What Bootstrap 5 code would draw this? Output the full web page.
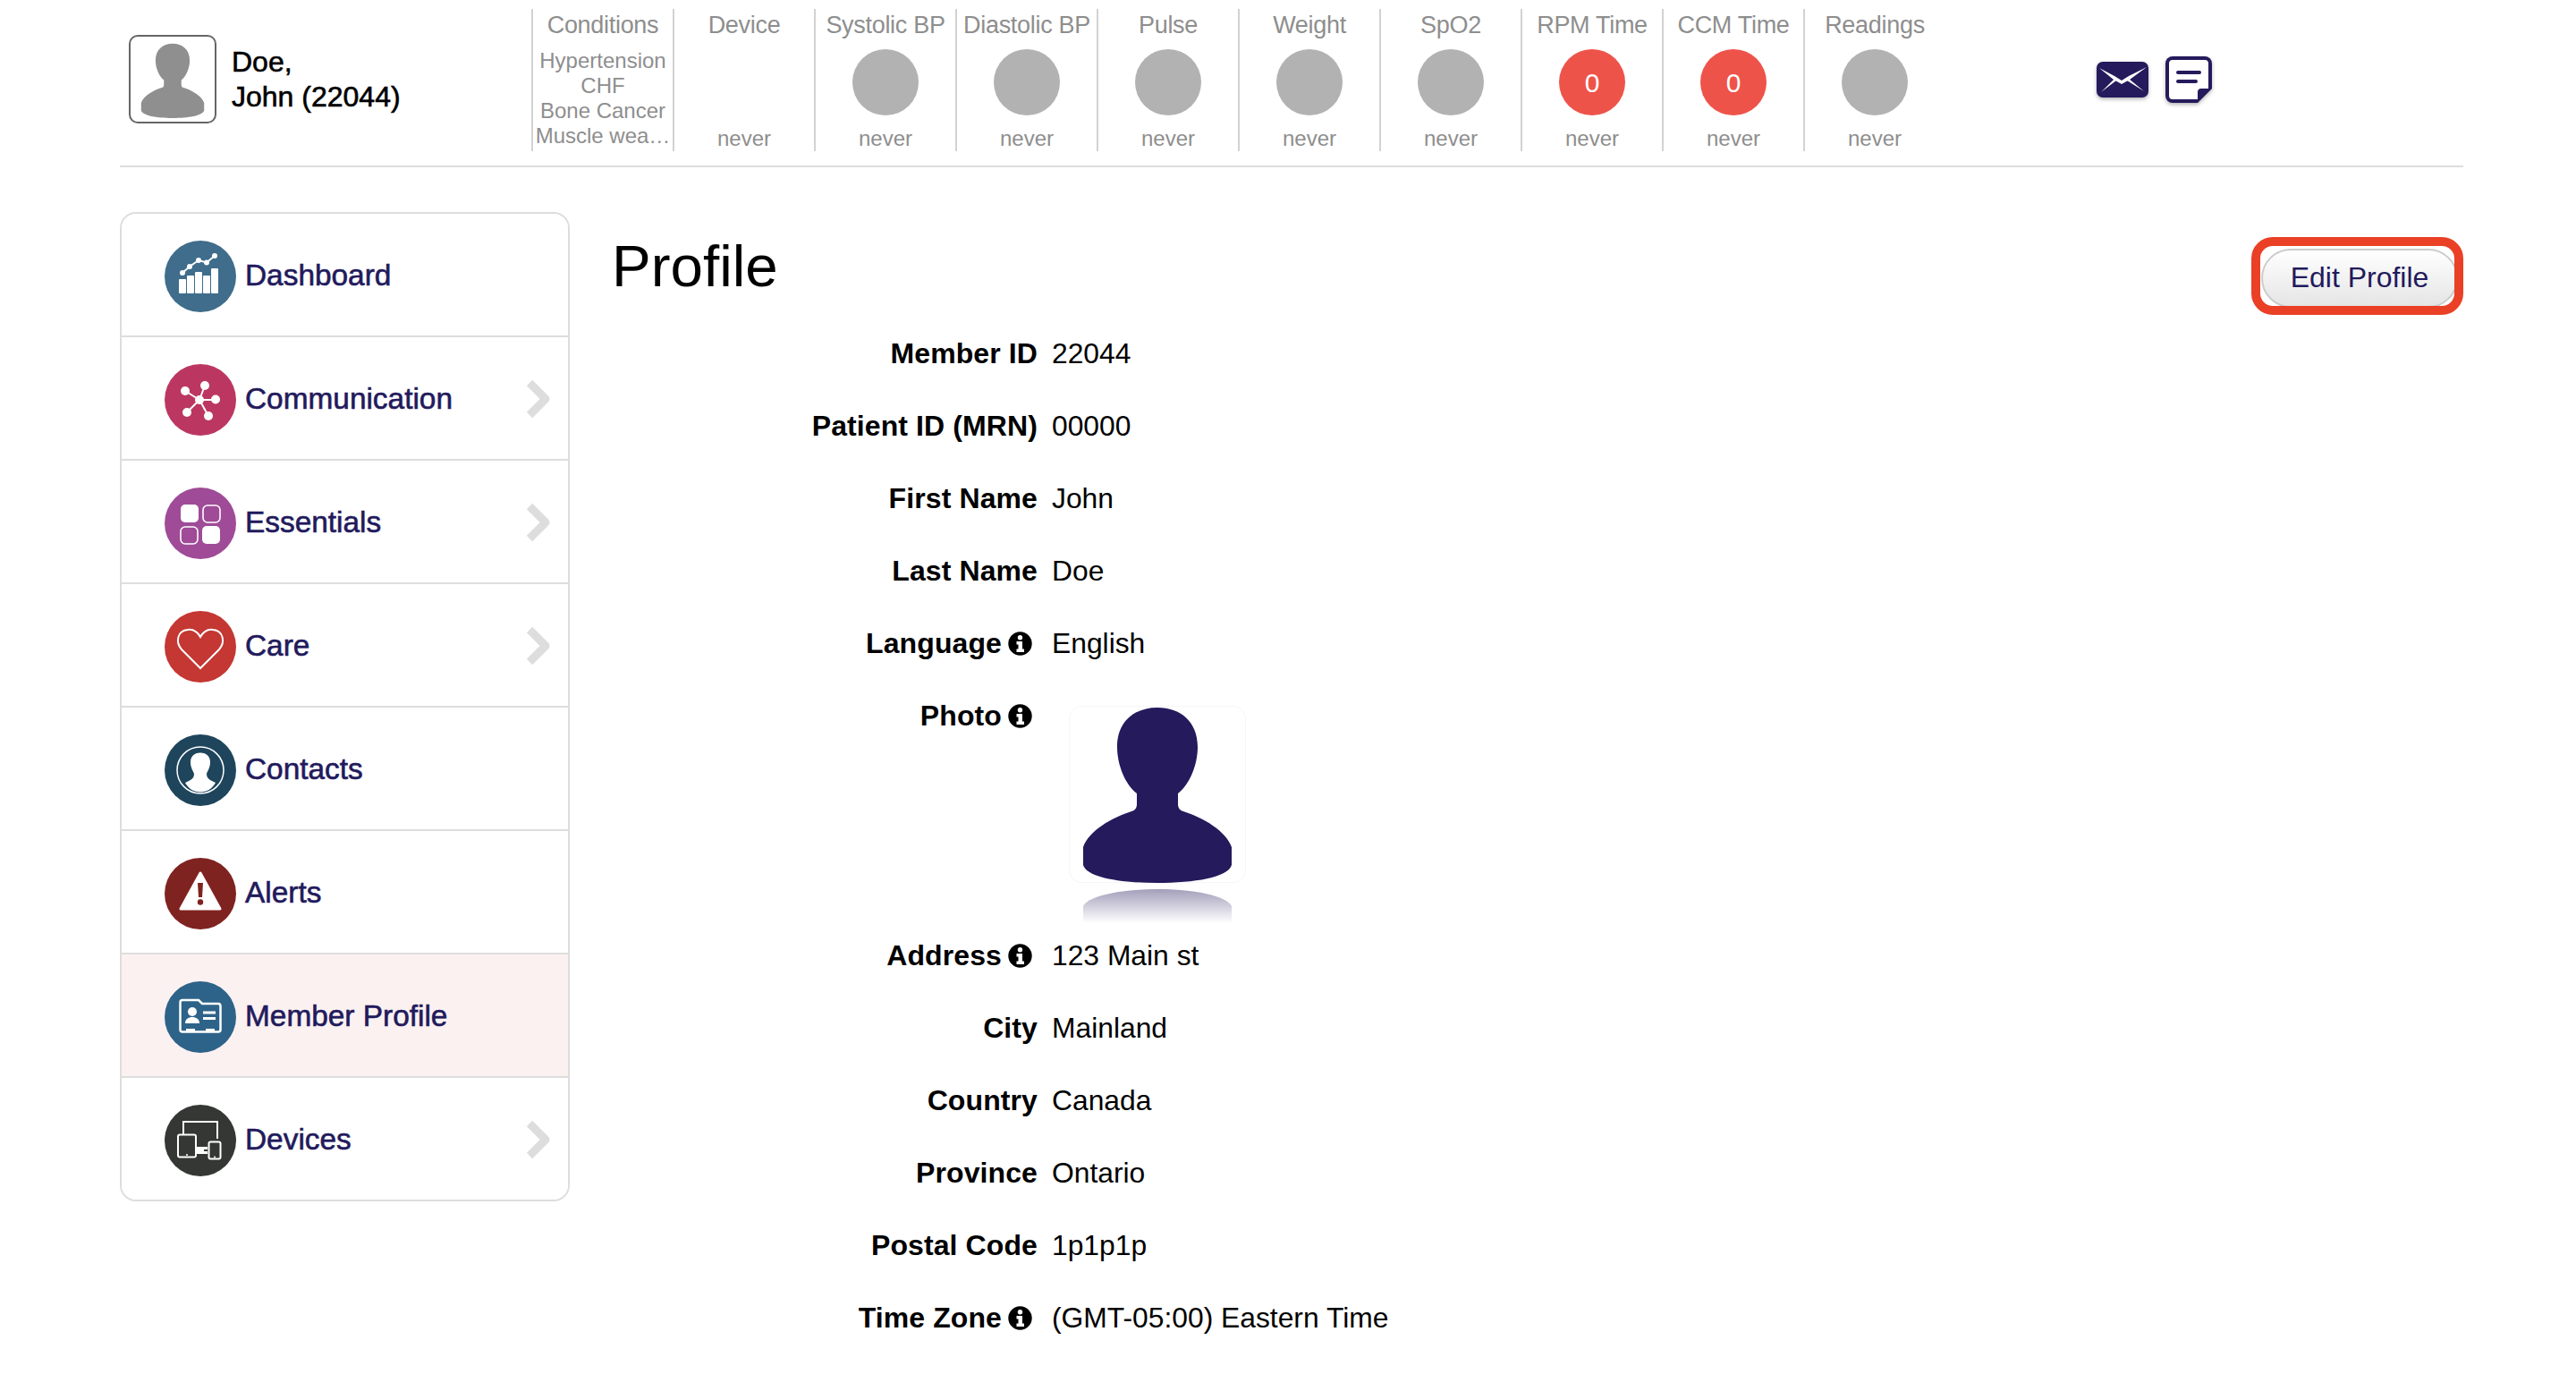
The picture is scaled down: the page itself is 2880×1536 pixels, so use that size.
<!DOCTYPE html>
<html lang="en">
<head>
    <meta charset="UTF-8">
    <meta name="viewport" content="width=device-width, initial-scale=1.0">
    <title>Profile</title>
    <link href="https://cdn.jsdelivr.net/npm/bootstrap@5.3.0/dist/css/bootstrap.min.css" rel="stylesheet">
    <style>
        body { font-family: "Liberation Sans", Arial, sans-serif; color: #000; background: #fff; }
        .page-wrap { padding: 0 126px 0 134px; }

        /* top bar */
        .top-bar { height: 187px; border-bottom: 2px solid #ddd; }
        .patient-box { width: 460px; margin-top: 39px; padding-left: 10px; }
        .avatar-box { width: 98px; height: 99px; border: 2px solid #666; border-radius: 10px; }
        .avatar-box svg { fill: #8f8f8f; margin-top: 3px; }
        .patient-name { font-size: 32px; line-height: 39px; margin-left: 17px; -webkit-text-stroke: .6px #000; }
        .stat-col { width: 158px; height: 159px; margin-top: 10px; border-left: 2px solid #d2d2d2; color: #8e8e8e; text-align: center; }
        .stat-col:last-of-type { border-right: 2px solid #d2d2d2; width: 160px; }
        .stat-title { font-size: 27px; line-height: 36px; white-space: nowrap; letter-spacing: -.3px; }
        .stat-list { font-size: 24px; line-height: 28px; margin-top: 8px; white-space: nowrap; }
        .stat-dot { width: 74px; height: 74px; margin: 9px auto 0; border-radius: 50%; background: #b2b2b2; color: #fff; font-size: 30px; }
        .stat-dot.is-late { background: #ee534a; }
        .stat-never { font-size: 24px; line-height: 30px; margin-top: auto; margin-bottom: -1px; }
        .top-icons { margin: 63px 0 0 170px; gap: 19px; }
        .top-icons svg { filter: drop-shadow(0 2px 2px rgba(0,0,0,.3)); }

        /* side menu */
        .side-menu { width: 503px; margin-top: 50px; flex: none; border: 2px solid #ddd; border-radius: 18px; overflow: hidden; }
        .side-menu .list-group-item { height: 138px; padding: 2px 20px 0 48px; border: 0; border-bottom: 2px solid #ddd; border-radius: 0; font-size: 33.4px; color: #221a5c; -webkit-text-stroke: .6px #221a5c; gap: 10px; }
        .side-menu .list-group-item:last-child { border-bottom: 0; height: 136px; }
        .side-menu .list-group-item.is-current { background: #fcf1f1; }
        .menu-icon { width: 80px; height: 80px; margin-top: 2px; flex: none; }
        .menu-arrow { margin-left: auto; }

        /* profile */
        .profile-main { margin: 50px 0 0 51px; }
        .profile-title { font-size: 65.5px; font-weight: 400; line-height: 77px; margin: 22px 0 0 -4px; }
        .title-row { height: 139px; }
        .edit-ring { width: 237px; height: 87px; margin-top: 28px; border: 10px solid #ea4026; border-radius: 24px; overflow: hidden; background: #fff; }
        .edit-btn { display: block; width: 220px; height: 66px; margin: 3px 0 0 1px; border: 2px solid #ccc; border-radius: 33px; background: linear-gradient(#fff, #e5e5e5); color: #221a5c; font-size: 32px; line-height: 60px; text-align: center; }
        .info-row { height: 81px; font-size: 31.8px; line-height: 38px; }
        .info-row.photo-row { height: 268px; }
        .info-label { width: 472px; flex: none; text-align: right; font-weight: 700; font-size: 32px; letter-spacing: .1px; }
        .info-value { margin-left: 16px; }
        .info-glyph { width: 27px; height: 27px; margin: -5px 6px 0 7px; vertical-align: middle; }
        .photo-frame { width: 198px; height: 198px; margin: 8px 0 0 35px; border: 1px solid #f6f6f6; border-radius: 14px; }
        .photo-frame svg { display: block; margin: -1px; fill: #251a5c; }
        .photo-shine { display: block; margin: 5px 0 0 35px; }
    </style>
</head>
<body>

<svg width="0" height="0" class="position-absolute">
    <defs>
        <symbol id="bust" viewBox="0 0 198 198">
            <path d="M99 2C125 2 144 18 144 46C144 66 135 88 122 98V110C122 114 124 117 128 118C150 125 176 140 182 158V178C178 192 140 198 99 198C58 198 20 192 16 178V158C22 140 48 125 70 118C74 117 76 114 76 110V98C63 88 54 66 54 46C54 18 73 2 99 2Z"/>
        </symbol>
        <symbol id="info" viewBox="0 0 27 27">
            <circle cx="13.5" cy="13.5" r="13.2" fill="#000"/>
            <circle cx="13.5" cy="6.8" r="2.7" fill="#fff"/>
            <path d="M9.5 11h6.5v8.5h2v3.5h-8.5v-3.5h2v-5h-2z" fill="#fff"/>
        </symbol>
        <symbol id="arrow" viewBox="0 0 28 46">
            <path d="M5 5L23 23L5 41" fill="none" stroke="#ddd" stroke-width="9" stroke-linejoin="round"/>
        </symbol>
        <linearGradient id="shine" x1="0" y1="0" x2="0" y2="1">
            <stop offset="0" stop-color="#251a5c" stop-opacity=".42"/>
            <stop offset="1" stop-color="#251a5c" stop-opacity="0"/>
        </linearGradient>
    </defs>
</svg>

<div class="page-wrap">
    <header class="top-bar d-flex align-items-start">
        <div class="patient-box d-flex align-items-center">
            <div class="avatar-box d-flex align-items-center justify-content-center">
                <svg width="84" height="84"><use href="#bust"/></svg>
            </div>
            <div class="patient-name">Doe,<br>John (22044)</div>
        </div>

        <div class="stat-col d-flex flex-column">
            <div class="stat-title">Conditions</div>
            <div class="stat-list">
                <div>Hypertension</div>
                <div>CHF</div>
                <div>Bone Cancer</div>
                <div>Muscle wea…</div>
            </div>
        </div>
        <div class="stat-col d-flex flex-column">
            <div class="stat-title">Device</div>
            <div class="stat-never">never</div>
        </div>
        <div class="stat-col d-flex flex-column">
            <div class="stat-title">Systolic BP</div>
            <div class="stat-dot"></div>
            <div class="stat-never">never</div>
        </div>
        <div class="stat-col d-flex flex-column">
            <div class="stat-title">Diastolic BP</div>
            <div class="stat-dot"></div>
            <div class="stat-never">never</div>
        </div>
        <div class="stat-col d-flex flex-column">
            <div class="stat-title">Pulse</div>
            <div class="stat-dot"></div>
            <div class="stat-never">never</div>
        </div>
        <div class="stat-col d-flex flex-column">
            <div class="stat-title">Weight</div>
            <div class="stat-dot"></div>
            <div class="stat-never">never</div>
        </div>
        <div class="stat-col d-flex flex-column">
            <div class="stat-title">SpO2</div>
            <div class="stat-dot"></div>
            <div class="stat-never">never</div>
        </div>
        <div class="stat-col d-flex flex-column">
            <div class="stat-title">RPM Time</div>
            <div class="stat-dot is-late d-flex align-items-center justify-content-center">0</div>
            <div class="stat-never">never</div>
        </div>
        <div class="stat-col d-flex flex-column">
            <div class="stat-title">CCM Time</div>
            <div class="stat-dot is-late d-flex align-items-center justify-content-center">0</div>
            <div class="stat-never">never</div>
        </div>
        <div class="stat-col d-flex flex-column">
            <div class="stat-title">Readings</div>
            <div class="stat-dot"></div>
            <div class="stat-never">never</div>
        </div>

        <div class="top-icons d-flex align-items-center">
            <svg width="58" height="40" viewBox="0 0 58 40">
                <rect width="58" height="40" rx="7" fill="#251a5c"/>
                <path d="M3 7L20 16L28 21L36 16L56 6L37 20L28 25L19 20Z" fill="#fff"/>
                <path d="M5 34L20 19L22 21ZM53 33L36 19L34 21Z" fill="#fff"/>
            </svg>
            <svg width="52" height="52" viewBox="0 0 52 52">
                <path d="M8 0H44A8 8 0 0 1 52 8V36L36 52H8A8 8 0 0 1 0 44V8A8 8 0 0 1 8 0Z" fill="#251a5c"/>
                <path d="M8 4H44Q48 4 48 8V36H40Q36 36 36 40V48H8Q4 48 4 44V8Q4 4 8 4Z" fill="#fff"/>
                <rect x="12" y="16" width="28" height="4" rx="2" fill="#251a5c"/>
                <rect x="12" y="26" width="24" height="4" rx="2" fill="#251a5c"/>
            </svg>
        </div>
    </header>

    <div class="d-flex align-items-start">
        <div class="side-menu list-group">
            <a href="#" class="list-group-item d-flex align-items-center text-decoration-none">
                <svg class="menu-icon" viewBox="0 0 80 80">
                    <circle cx="40" cy="40" r="40" fill="#3f6d8b"/>
                    <g fill="#fff">
                        <rect x="16" y="43" width="8" height="16" rx="1"/><rect x="25" y="39" width="8" height="20" rx="1"/><rect x="34" y="35" width="8" height="24" rx="1"/><rect x="43" y="39" width="8" height="20" rx="1"/><rect x="52" y="31" width="8" height="28" rx="1"/>
                        <circle cx="20" cy="36" r="3"/><circle cx="28" cy="29" r="3"/><circle cx="38" cy="22" r="3"/><circle cx="47" cy="24.5" r="3"/><circle cx="56" cy="17" r="3"/>
                    </g>
                    <path d="M20 36L28 29L38 22L47 24.5L56 17" fill="none" stroke="#fff" stroke-width="2"/>
                </svg>
                Dashboard
            </a>
            <a href="#" class="list-group-item d-flex align-items-center text-decoration-none">
                <svg class="menu-icon" viewBox="0 0 80 80">
                    <circle cx="40" cy="40" r="40" fill="#bb3762"/>
                    <path d="M39 40L23 30M39 40L45 24M39 40H57M39 40L49 58M39 40L25 54" stroke="#fff" stroke-width="2"/>
                    <g fill="#fff"><circle cx="39" cy="40" r="5"/><circle cx="23" cy="30" r="5"/><circle cx="45" cy="24" r="5"/><circle cx="57" cy="39.500" r="5"/><circle cx="49" cy="58" r="5"/><circle cx="25" cy="54" r="5"/></g>
                </svg>
                Communication
                <svg class="menu-arrow" width="28" height="46"><use href="#arrow"/></svg>
            </a>
            <a href="#" class="list-group-item d-flex align-items-center text-decoration-none">
                <svg class="menu-icon" viewBox="0 0 80 80">
                    <circle cx="40" cy="40" r="40" fill="#9f4b97"/>
                    <rect x="18" y="19" width="20" height="20" rx="5" fill="#fff"/>
                    <rect x="43" y="20" width="19" height="19" rx="5" fill="none" stroke="#fff" stroke-width="1.600"/>
                    <rect x="18" y="44" width="19" height="19" rx="5" fill="none" stroke="#fff" stroke-width="1.600"/>
                    <rect x="42" y="43" width="20" height="20" rx="5" fill="#fff"/>
                </svg>
                Essentials
                <svg class="menu-arrow" width="28" height="46"><use href="#arrow"/></svg>
            </a>
            <a href="#" class="list-group-item d-flex align-items-center text-decoration-none">
                <svg class="menu-icon" viewBox="0 0 80 80">
                    <circle cx="40" cy="40" r="40" fill="#c43732"/>
                    <path d="M40 64L19 43C12 35 14 22 26 21C33 20 38 25 40 29C42 25 47 20 54 21C66 22 68 35 61 43Z" fill="none" stroke="#fff" stroke-width="2"/>
                </svg>
                Care
                <svg class="menu-arrow" width="28" height="46"><use href="#arrow"/></svg>
            </a>
            <a href="#" class="list-group-item d-flex align-items-center text-decoration-none">
                <svg class="menu-icon" viewBox="0 0 80 80">
                    <circle cx="40" cy="40" r="40" fill="#1e455c"/>
                    <circle cx="40" cy="40" r="26" fill="none" stroke="#fff" stroke-width="1.500"/>
                    <path d="M40 20.500C47 20.500 51 25 51 31C51 37 48 41 47 44C47 47 48 49 51 51L57 54C53 61 47 64.500 40 64.500C33 64.500 27 61 23 54L29 51C32 49 33 47 33 44C32 41 29 37 29 31C29 25 33 20.500 40 20.500Z" fill="#fff"/>
                </svg>
                Contacts
            </a>
            <a href="#" class="list-group-item d-flex align-items-center text-decoration-none">
                <svg class="menu-icon" viewBox="0 0 80 80">
                    <circle cx="40" cy="40" r="40" fill="#7f2321"/>
                    <path d="M40 17L62 57H18Z" fill="#fff" stroke="#fff" stroke-width="3" stroke-linejoin="round"/>
                    <path d="M37 28H43L42 44H38Z" fill="#7f2321"/>
                    <circle cx="40" cy="49.500" r="3.200" fill="#7f2321"/>
                </svg>
                Alerts
            </a>
            <a href="#" class="list-group-item is-current d-flex align-items-center text-decoration-none">
                <svg class="menu-icon" viewBox="0 0 80 80">
                    <circle cx="40" cy="40" r="40" fill="#2e6389"/>
                    <path d="M20 21H38L42 25H60Q62.500 25 62.500 28V54Q62.500 56.500 60 56.500H20Q17.500 56.500 17.500 54V23.500Q17.500 21 20 21Z" fill="none" stroke="#fff" stroke-width="2.500"/>
                    <path d="M24 56H34V53H24ZM46 56H56V53H46Z" fill="#fff"/>
                    <circle cx="31" cy="34" r="5" fill="#fff"/>
                    <path d="M23 47C23 42 27 40 31 40C35 40 39 42 39 47Z" fill="#fff"/>
                    <rect x="43" y="33.500" width="14" height="3" fill="#fff"/>
                    <rect x="43" y="40" width="14" height="3" fill="#fff"/>
                </svg>
                Member Profile
            </a>
            <a href="#" class="list-group-item d-flex align-items-center text-decoration-none">
                <svg class="menu-icon" viewBox="0 0 80 80">
                    <circle cx="40" cy="40" r="40" fill="#353735"/>
                    <path d="M21 38V19H59V38" fill="none" stroke="#fff" stroke-width="2"/>
                    <rect x="15" y="33.500" width="20" height="25" rx="2" fill="#353735" stroke="#fff" stroke-width="2"/>
                    <rect x="36" y="47" width="12" height="8" fill="#fff"/>
                    <rect x="44" y="50" width="4" height="2" fill="#353735"/>
                    <rect x="49.500" y="41.500" width="13" height="19" rx="2" fill="#353735" stroke="#fff" stroke-width="2"/>
                    <circle cx="25" cy="56" r="1" fill="#fff"/><circle cx="56" cy="58.500" r="1" fill="#fff"/>
                </svg>
                Devices
                <svg class="menu-arrow" width="28" height="46"><use href="#arrow"/></svg>
            </a>
        </div>

        <main class="profile-main flex-grow-1">
            <div class="title-row d-flex justify-content-between align-items-start">
                <h1 class="profile-title">Profile</h1>
                <div class="edit-ring"><a href="#" class="edit-btn text-decoration-none">Edit Profile</a></div>
            </div>

            <div class="info-row d-flex"><div class="info-label">Member ID</div><div class="info-value">22044</div></div>
            <div class="info-row d-flex"><div class="info-label">Patient ID (MRN)</div><div class="info-value">00000</div></div>
            <div class="info-row d-flex"><div class="info-label">First Name</div><div class="info-value">John</div></div>
            <div class="info-row d-flex"><div class="info-label">Last Name</div><div class="info-value">Doe</div></div>
            <div class="info-row d-flex"><div class="info-label">Language<svg class="info-glyph"><use href="#info"/></svg></div><div class="info-value">English</div></div>
            <div class="info-row photo-row d-flex">
                <div class="info-label">Photo<svg class="info-glyph"><use href="#info"/></svg></div>
                <div>
                    <div class="photo-frame"><svg width="198" height="198"><use href="#bust"/></svg></div>
                    <svg class="photo-shine" width="198" height="40" viewBox="0 0 198 40">
                        <path d="M16 40V21C22 9 60 2 99 2C138 2 176 9 182 21V40Z" fill="url(#shine)"/>
                    </svg>
                </div>
            </div>
            <div class="info-row d-flex"><div class="info-label">Address<svg class="info-glyph"><use href="#info"/></svg></div><div class="info-value">123 Main st</div></div>
            <div class="info-row d-flex"><div class="info-label">City</div><div class="info-value">Mainland</div></div>
            <div class="info-row d-flex"><div class="info-label">Country</div><div class="info-value">Canada</div></div>
            <div class="info-row d-flex"><div class="info-label">Province</div><div class="info-value">Ontario</div></div>
            <div class="info-row d-flex"><div class="info-label">Postal Code</div><div class="info-value">1p1p1p</div></div>
            <div class="info-row d-flex"><div class="info-label">Time Zone<svg class="info-glyph"><use href="#info"/></svg></div><div class="info-value">(GMT-05:00) Eastern Time</div></div>
        </main>
    </div>
</div>

<script src="https://cdn.jsdelivr.net/npm/bootstrap@5.3.0/dist/js/bootstrap.bundle.min.js"></script>
</body>
</html>
